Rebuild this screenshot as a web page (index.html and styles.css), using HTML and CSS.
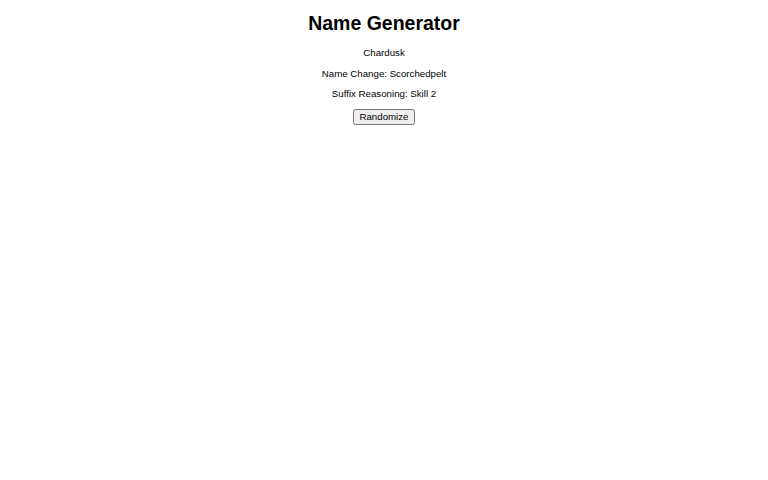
FILE: index.html
```html
<!DOCTYPE html>
<html>
<head>
<meta charset="utf-8">
<title>Name Generator</title>
<link rel="stylesheet" href="styles.css">
</head>
<body>
<div class="app">
  <h1 class="title">Name Generator</h1>
  <p class="line">Chardusk</p>
  <p class="line">Name Change: Scorchedpelt</p>
  <p class="line">Suffix Reasoning: Skill 2</p>
  <button class="btn">Randomize</button>
</div>
</body>
</html>
```
FILE: styles.css
```css
body {
  margin: 0;
  font-family: "Liberation Sans", Arial, sans-serif;
  font-size: 9.7px;
  color: #000;
  background: #fff;
}
.app {
  text-align: center;
  padding-top: 12px;
}
.title {
  font-size: 19.5px;
  font-weight: bold;
  margin: 0 0 12px;
}
.line {
  margin: 9.6px 0;
}
.btn {
  font-family: "Liberation Sans", Arial, sans-serif;
  font-size: 9.7px;
  line-height: 10px;
  padding: 1px 4px;
  margin-top: 0;
}
```
